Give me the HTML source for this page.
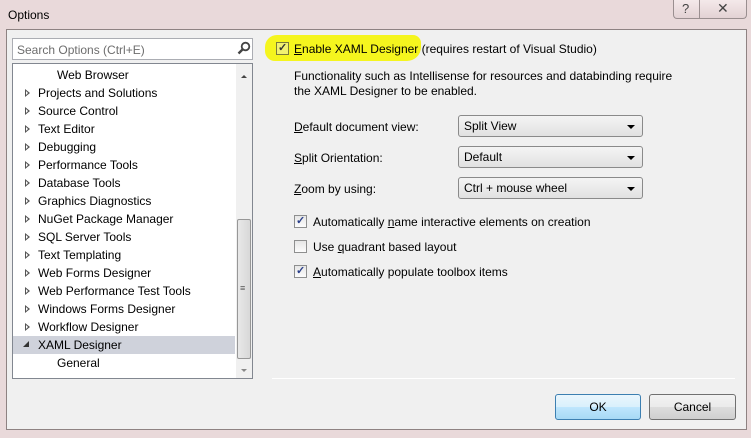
<!DOCTYPE html>
<html><head><style>
*{margin:0;padding:0;box-sizing:border-box}
body{width:751px;height:438px;overflow:hidden;background:#e9d9da;font-family:"Liberation Sans",sans-serif;font-size:12px;color:#000;position:relative}
.a{position:absolute}
.t{position:absolute;white-space:nowrap;line-height:14px}
u{text-decoration:underline}
.tri{position:absolute;width:0;height:0;border-top:4px solid transparent;border-bottom:4px solid transparent;border-left:5px solid #555}
.tri:after{content:"";position:absolute;left:-4px;top:-2px;border-top:2px solid transparent;border-bottom:2px solid transparent;border-left:2px solid #fff}
.cb{position:absolute;width:13px;height:13px;border:1px solid #8e8f8f;background:linear-gradient(#e6e6e6,#fcfcfc)}
.ck{position:absolute;left:1px;top:-2px;font-size:11px;color:#2a3f8a;font-weight:bold}
.dd{position:absolute;width:185px;height:22px;border:1px solid #8a8a8a;border-radius:3px;background:linear-gradient(#f4f4f4,#e1e1e1)}
.dd span{position:absolute;left:5px;top:3px}
.dd i{position:absolute;right:7px;top:9px;border-left:4px solid transparent;border-right:4px solid transparent;border-top:4px solid #000}
.btn{position:absolute;height:26px;border:1px solid #707070;border-radius:3px;background:linear-gradient(#f2f2f2 0,#ebebeb 50%,#dddddd 51%,#cfcfcf);text-align:center;line-height:24px}
</style></head><body>
<div class="t" style="left:8px;top:8px;font-size:12px">Options</div>
<div class="a" style="left:673px;top:0;width:74px;height:19px;border:1px solid #9a8f90;border-top:none;border-radius:0 0 4px 4px;background:linear-gradient(#f4e9ea,#e3d2d4)"></div>
<div class="a" style="left:699px;top:0;width:1px;height:19px;background:#9a8f90"></div>
<div class="t" style="left:682px;top:2px;font-size:13px;color:#444">?</div>
<div class="t" style="left:717px;top:1px;font-size:14px;color:#444">✕</div>
<div class="a" style="left:6px;top:29px;width:741px;height:401px;background:#f0f0f0;border:1px solid #8e8282"></div>

<div class="a" style="left:12px;top:38px;width:241px;height:22px;background:#fff;border:1px solid #abadb3"></div>
<div class="t" style="left:17px;top:43px;color:#6d6d6d">Search Options (Ctrl+E)</div>
<svg class="a" style="left:237px;top:41px" width="14" height="14"><circle cx="8.5" cy="5.5" r="3.8" fill="none" stroke="#444" stroke-width="1.8"/><line x1="6" y1="8" x2="1.5" y2="12.5" stroke="#444" stroke-width="2.4"/></svg>

<div class="a" style="left:12px;top:63px;width:241px;height:316px;background:#fff;border:1px solid #828790"></div>
<div class="a" style="left:236px;top:64px;width:16px;height:314px;background:#f0f0f0"></div>
<div class="a" style="left:237px;top:219px;width:14px;height:140px;border:1px solid #979797;border-radius:2px;background:linear-gradient(90deg,#e8e8e8,#d8d8d8)"></div>
<div class="t" style="left:240px;top:281px;font-size:9px;color:#555">≡</div>
<div class="a" style="left:241px;top:75px;border-left:3px solid transparent;border-right:3px solid transparent;border-bottom:3px solid #444"></div>
<div class="a" style="left:241px;top:369px;border-left:3px solid transparent;border-right:3px solid transparent;border-top:3px solid #888"></div>
<div class="a" style="left:13px;top:336px;width:222px;height:18px;background:#cfd2db"></div>

<div class="t" style="left:57px;top:68px">Web Browser</div>
<div class="tri" style="left:25px;top:89px"></div><div class="t" style="left:38px;top:86px">Projects and Solutions</div>
<div class="tri" style="left:25px;top:107px"></div><div class="t" style="left:38px;top:104px">Source Control</div>
<div class="tri" style="left:25px;top:125px"></div><div class="t" style="left:38px;top:122px">Text Editor</div>
<div class="tri" style="left:25px;top:143px"></div><div class="t" style="left:38px;top:140px">Debugging</div>
<div class="tri" style="left:25px;top:161px"></div><div class="t" style="left:38px;top:158px">Performance Tools</div>
<div class="tri" style="left:25px;top:179px"></div><div class="t" style="left:38px;top:176px">Database Tools</div>
<div class="tri" style="left:25px;top:197px"></div><div class="t" style="left:38px;top:194px">Graphics Diagnostics</div>
<div class="tri" style="left:25px;top:215px"></div><div class="t" style="left:38px;top:212px">NuGet Package Manager</div>
<div class="tri" style="left:25px;top:233px"></div><div class="t" style="left:38px;top:230px">SQL Server Tools</div>
<div class="tri" style="left:25px;top:251px"></div><div class="t" style="left:38px;top:248px">Text Templating</div>
<div class="tri" style="left:25px;top:269px"></div><div class="t" style="left:38px;top:266px">Web Forms Designer</div>
<div class="tri" style="left:25px;top:287px"></div><div class="t" style="left:38px;top:284px">Web Performance Test Tools</div>
<div class="tri" style="left:25px;top:305px"></div><div class="t" style="left:38px;top:302px">Windows Forms Designer</div>
<div class="tri" style="left:25px;top:323px"></div><div class="t" style="left:38px;top:320px">Workflow Designer</div>
<div class="a" style="left:23px;top:341px;border-left:6px solid transparent;border-bottom:6px solid #333"></div><div class="t" style="left:38px;top:338px">XAML Designer</div>
<div class="t" style="left:57px;top:356px">General</div>

<div class="a" style="left:265px;top:35px;width:156px;height:26px;background:#f5f51e;border-radius:12px 8px 14px 10px"></div>
<div class="cb" style="left:276px;top:42px;border-color:#7a7a3a;background:#f1f170"><span class="ck" style="color:#333">✓</span></div>
<div class="t" style="left:294px;top:42px"><u>E</u>nable XAML Designer (requires restart of Visual Studio)</div>
<div class="t" style="left:294px;top:69px">Functionality such as Intellisense for resources and databinding require</div>
<div class="t" style="left:294px;top:84px">the XAML Designer to be enabled.</div>
<div class="t" style="left:294px;top:120px"><u>D</u>efault document view:</div>
<div class="t" style="left:294px;top:151px"><u>S</u>plit Orientation:</div>
<div class="t" style="left:294px;top:182px"><u>Z</u>oom by using:</div>
<div class="dd" style="left:458px;top:115px"><span>Split View</span><i></i></div>
<div class="dd" style="left:458px;top:146px"><span>Default</span><i></i></div>
<div class="dd" style="left:458px;top:177px"><span>Ctrl + mouse wheel</span><i></i></div>
<div class="cb" style="left:294px;top:215px"><span class="ck">✓</span></div>
<div class="t" style="left:313px;top:215px">Automatically <u>n</u>ame interactive elements on creation</div>
<div class="cb" style="left:294px;top:240px"></div>
<div class="t" style="left:313px;top:240px">Use <u>q</u>uadrant based layout</div>
<div class="cb" style="left:294px;top:265px"><span class="ck">✓</span></div>
<div class="t" style="left:313px;top:265px"><u>A</u>utomatically populate toolbox items</div>

<div class="a" style="left:272px;top:378px;width:463px;height:1px;background:#a0a0a0;border-bottom:1px solid #fff"></div>
<div class="btn" style="left:555px;top:394px;width:86px;border-color:#3c7fb1;background:linear-gradient(#eaf6fd 0,#d9f0fc 50%,#bee6fd 51%,#a7d9f5)">OK</div>
<div class="btn" style="left:649px;top:394px;width:87px">Cancel</div>
</body></html>
